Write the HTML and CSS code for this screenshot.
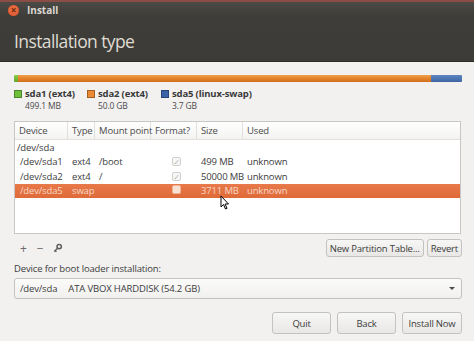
FILE: index.html
```html
<!DOCTYPE html>
<html lang="en">
  <head>
    <meta charset="UTF-8" />
    <title>Install</title>
    <link rel="stylesheet" href="styles.css">
  </head>
  <body>
    <div class="window">
      <div class="header">
        <div class="titlebar">
          <span class="close">&#215;</span>
          <span class="title">Install</span>
        </div>
        <h1>Installation type</h1>
      </div>

      <div class="main">
        <div class="bar">
          <div class="seg green"></div>
          <div class="seg orange"></div>
          <div class="seg blue"></div>
        </div>

        <div class="legend">
          <div class="legend-item">
            <span class="swatch green"></span>
            <div>
              <div class="legend-name">sda1 (ext4)</div>
              <div class="legend-size">499.1 MB</div>
            </div>
          </div>
          <div class="legend-item">
            <span class="swatch orange"></span>
            <div>
              <div class="legend-name">sda2 (ext4)</div>
              <div class="legend-size">50.0 GB</div>
            </div>
          </div>
          <div class="legend-item">
            <span class="swatch blue"></span>
            <div>
              <div class="legend-name">sda5 (linux-swap)</div>
              <div class="legend-size">3.7 GB</div>
            </div>
          </div>
        </div>

        <div class="table">
          <div class="row head">
            <div class="c device">Device</div>
            <div class="c type">Type</div>
            <div class="c mount">Mount point</div>
            <div class="c format">Format?</div>
            <div class="c size">Size</div>
            <div class="c used">Used</div>
          </div>
          <div class="row">
            <div class="c disk">/dev/sda</div>
          </div>
          <div class="row">
            <div class="c device sub">/dev/sda1</div>
            <div class="c type">ext4</div>
            <div class="c mount">/boot</div>
            <div class="c format"><span class="check">&#10003;</span></div>
            <div class="c size">499 MB</div>
            <div class="c used">unknown</div>
          </div>
          <div class="row">
            <div class="c device sub">/dev/sda2</div>
            <div class="c type">ext4</div>
            <div class="c mount">/</div>
            <div class="c format"><span class="check">&#10003;</span></div>
            <div class="c size">50000 MB</div>
            <div class="c used">unknown</div>
          </div>
          <div class="row selected">
            <div class="c device sub">/dev/sda5</div>
            <div class="c type">swap</div>
            <div class="c mount"></div>
            <div class="c format"><span class="check"></span></div>
            <div class="c size">3711 MB</div>
            <div class="c used">unknown</div>
            <svg class="cursor" width="10" height="15" viewBox="0 0 10 15">
              <path d="M1 1 L1 12 L3.5 9.5 L5.5 14 L7 13.3 L5 9 L8.5 9 Z" fill="#fff" stroke="#000" stroke-width="1"/>
            </svg>
          </div>
        </div>

        <div class="tools">
          <div class="icons">
            <span class="tool">+</span>
            <span class="tool">&#8722;</span>
            <svg class="tool-svg" width="10" height="10" viewBox="0 0 10 10">
              <circle cx="6.2" cy="3.6" r="2.2" fill="none" stroke="#5e5d59" stroke-width="1.5"/>
              <path d="M4.6 5.2 L1.2 8.6 M2.2 7.6 L3.4 8.8" stroke="#5e5d59" stroke-width="1.4"/>
            </svg>
          </div>
          <div class="tool-buttons">
            <button class="btn">New Partition Table...</button>
            <button class="btn">Revert</button>
          </div>
        </div>

        <div class="boot-label">Device for boot loader installation:</div>
        <div class="combo">
          <span class="combo-dev">/dev/sda</span>
          <span>ATA VBOX HARDDISK (54.2 GB)</span>
          <span class="arrow"></span>
        </div>

        <div class="actions">
          <button class="btn wide">Quit</button>
          <button class="btn wide">Back</button>
          <button class="btn wide">Install Now</button>
        </div>
      </div>
    </div>
  </body>
</html>
```

FILE: styles.css
```css
* {
  margin: 0;
  padding: 0;
  box-sizing: border-box;
}

body {
  font-family: "Open Sans", "DejaVu Sans", sans-serif;
  font-size: 9.5px;
  letter-spacing: -0.15px;
  color: #3c3c3c;
  background: #f2f1f0;
  width: 474px;
  height: 341px;
  overflow: hidden;
}

.window {
  border-top: 2px solid #8a4d46;
}

.header {
  background: linear-gradient(#4b4a45 0px, #3e3d39 14px, #3c3b37 100%);
  height: 60px;
  border-bottom: 1px solid #2c2b28;
}

.titlebar {
  display: flex;
  align-items: center;
  height: 16px;
  padding-left: 8px;
}

.close {
  width: 11px;
  height: 11px;
  border-radius: 50%;
  background: radial-gradient(circle at 50% 40%, #f07746, #d8502a);
  color: #6a2410;
  font-size: 10px;
  line-height: 11px;
  text-align: center;
  font-weight: bold;
}

.title {
  margin-left: 8px;
  color: #dcd9d2;
  font-weight: bold;
  font-size: 10px;
  letter-spacing: 0;
}

.header h1 {
  font-weight: normal;
  font-size: 17.5px;
  letter-spacing: -0.6px;
  color: #dfdbd2;
  padding: 11px 0 0 14px;
}

.main {
  padding: 13px 13px 0 14px;
}

.bar {
  display: flex;
  height: 7px;
  width: 448px;
  border-radius: 1px;
  overflow: hidden;
}

.seg.green {
  width: 4px;
  background: linear-gradient(#8ad04a, #5fa52a);
}

.seg.orange {
  flex: 1;
  background: linear-gradient(#f0a04c, #e5822a 50%, #cf6f1e);
}

.seg.blue {
  width: 31px;
  background: linear-gradient(#5d86c0, #3d65a3);
}

.legend {
  display: flex;
  margin-top: 6px;
}

.legend-item {
  display: flex;
  gap: 3px;
  width: 73px;
  flex-shrink: 0;
}

.legend-item:nth-child(2) {
  width: 74px;
}

.legend-item:nth-child(3) {
  width: auto;
}

.swatch {
  flex-shrink: 0;
  width: 8px;
  height: 8px;
  margin-top: 2px;
  border: 1px solid rgba(0, 0, 0, 0.3);
}

.swatch.green { background: #6ec03a; }
.swatch.orange { background: #ea8a35; }
.swatch.blue { background: #3b62a6; }

.legend-name {
  font-weight: bold;
  font-size: 9.5px;
  line-height: 12px;
  color: #3a3a3a;
  white-space: nowrap;
}

.legend-size {
  font-size: 8.5px;
  line-height: 11px;
  color: #4a4a4a;
}

.table {
  margin-top: 10px;
  width: 447px;
  height: 113px;
  background: #fff;
  border: 1px solid #c9c7c3;
}

.row {
  display: flex;
  height: 14.5px;
  align-items: center;
  position: relative;
}

.row.head {
  height: 18px;
  background: linear-gradient(#ffffff, #f4f3f2);
  border-bottom: 1px solid #e1dfdc;
  color: #4a4a4a;
}

.row.head .c {
  border-right: 1px solid #e2e0dd;
  height: 100%;
  display: flex;
  align-items: center;
}

.row.head .used {
  border-right: none;
}

.c {
  white-space: nowrap;
  padding-left: 4px;
}

.device { width: 53px; }
.type { width: 27px; }
.mount { width: 56px; }
.format { width: 46px; }
.size { width: 46px; }
.used { flex: 1; }

.disk {
  padding-left: 2px;
}

.device.sub {
  padding-left: 5px;
}

.format .check {
  display: inline-block;
  width: 9px;
  height: 9px;
  margin-left: 17px;
  border: 1px solid #d0cfcc;
  border-radius: 2px;
  background: #f7f7f6;
  color: #b5b4b1;
  font-size: 8px;
  line-height: 8px;
  text-align: center;
}

.row.selected {
  background: linear-gradient(#e8794a, #df6a38);
  color: #f6d8c6;
}

.row.selected .check {
  border-color: #f2b594;
  background: #f8e0d2;
}

.cursor {
  position: absolute;
  left: 205px;
  top: 11px;
}

.tools {
  display: flex;
  justify-content: space-between;
  align-items: center;
  margin-top: 5px;
  width: 448px;
}

.icons {
  display: flex;
  align-items: center;
  gap: 10px;
  padding-left: 6px;
  color: #6b6a66;
}

.tool {
  font-size: 12px;
}

.tool-buttons {
  display: flex;
  gap: 3px;
}

.btn {
  font-family: "Open Sans", "DejaVu Sans", sans-serif;
  font-size: 9.5px;
  letter-spacing: -0.2px;
  color: #3c3c3c;
  height: 18px;
  padding: 0 3px;
  border: 1px solid #c4c2be;
  border-radius: 3px;
  background: linear-gradient(#f7f7f6, #e8e7e5);
  white-space: nowrap;
}

.boot-label {
  margin-top: 5px;
}

.combo {
  display: flex;
  align-items: center;
  gap: 11px;
  margin-top: 3px;
  width: 448px;
  height: 21px;
  padding: 0 6px 0 5px;
  border: 1px solid #c4c2be;
  border-radius: 3px;
  background: linear-gradient(#fbfbfa, #f1f0ef);
}

.arrow {
  margin-left: auto;
  width: 0;
  height: 0;
  border-left: 3px solid transparent;
  border-right: 3px solid transparent;
  border-top: 3px solid #4a4a4a;
}

.actions {
  display: flex;
  justify-content: flex-end;
  gap: 6px;
  margin-top: 13px;
  width: 448px;
}

.btn.wide {
  width: 59px;
  height: 22px;
  padding: 0;
}

.btn.wide:last-child {
  width: 60px;
}
```
